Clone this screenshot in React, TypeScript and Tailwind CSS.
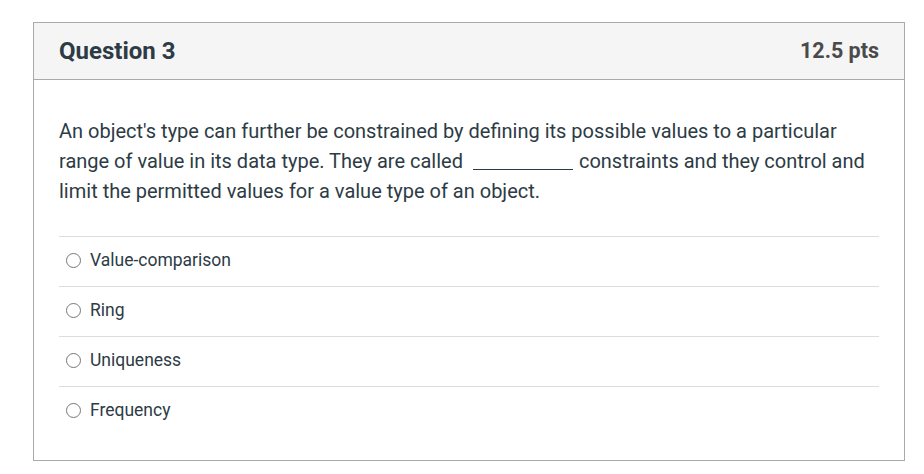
const answers = ["Value-comparison", "Ring", "Uniqueness", "Frequency"];

export default function App() {
  return (
    <div className="min-h-[474px] bg-white pl-[33px] pt-[22px] font-['Roboto',sans-serif] text-[#2d3b45]">
      <section className="w-[872px] border border-[#aaaaaa]">
        <header className="flex h-[57px] items-center justify-between border-b border-[#aaaaaa] bg-[#f5f5f5] px-[25px]">
          <h2 className="text-[24px] font-bold">Question 3</h2>
          <span className="text-[21.5px] font-bold text-[#4a4a4a]">12.5 pts</span>
        </header>

        <div className="px-[25px] pb-[24px] pt-[36px]">
          <p className="text-[20px] leading-[30px]">
            An object's type can further be constrained by defining its possible values to a particular range of value
            in its data type. They are called
            <span className="ml-[10px] mr-[6px] inline-block w-[100px] translate-y-[2px] border-b border-[#2d3b45]" />
            constraints and they control and limit the permitted values for a value type of an object.
          </p>

          <ul className="mt-[30px]">
            {answers.map((a) => (
              <li key={a} className="flex h-[50px] items-center border-t border-[#dddddd] pb-[2px] pl-[7px]">
                <span className="h-[15px] w-[15px] rounded-full border-[1.5px] border-[#777777]" />
                <span className="ml-[9px] text-[17.5px]">{a}</span>
              </li>
            ))}
          </ul>
        </div>
      </section>
    </div>
  );
}
